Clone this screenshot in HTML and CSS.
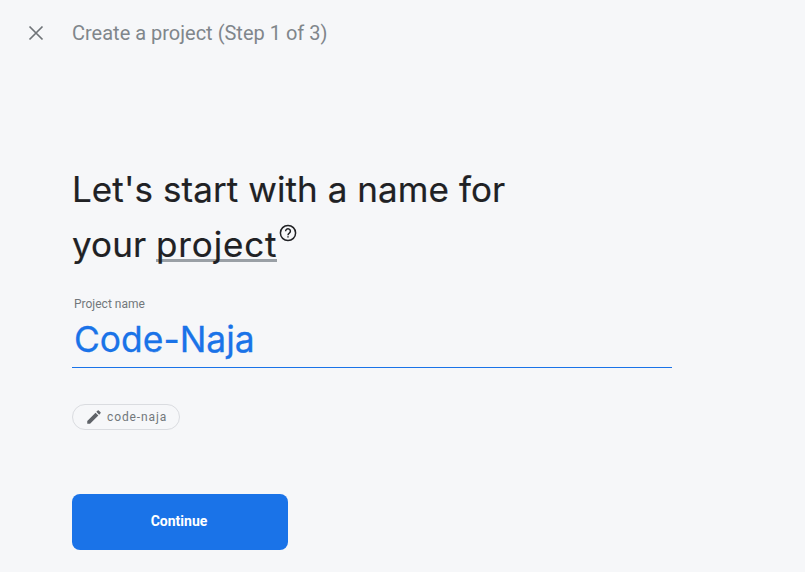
FILE: index.html
```html
<!DOCTYPE html>
<html lang="en">
<head>
    <meta charset="UTF-8">
    <meta name="viewport" content="width=device-width, initial-scale=1.0">
    <title>Create a project</title>
    <link rel="stylesheet" href="styles.css">
</head>
<body>
    <header class="top-bar">
        <button type="button" class="close-btn" aria-label="Close">
            <svg width="24" height="24" viewBox="0 0 24 24"><path d="M5.5 5.5 18.5 18.5M18.5 5.5 5.5 18.5"/></svg>
        </button>
        <span class="step-title">Create a project (Step 1 of 3)</span>
    </header>

    <main class="content">
        <h1>Let's start with a name for<br>your <span class="term">project</span><svg class="help-icon" width="18" height="18" viewBox="0 0 18 18"><circle cx="9" cy="9" r="7.6"/><path d="M6.6 7.2a2.4 2.4 0 1 1 3.7 2c-.9.6-1.3 1-1.3 2"/><path d="M9 12.3v1.3"/></svg></h1>

        <div class="name-field">
            <label for="projectName">Project name</label>
            <input type="text" id="projectName" value="Code-Naja">
        </div>

        <div class="chip">
            <svg width="18" height="18" viewBox="0 0 24 24"><path d="M3 17.25V21h3.75L17.81 9.94l-3.75-3.75L3 17.25zM20.71 7.04a1 1 0 0 0 0-1.41l-2.34-2.34a1 1 0 0 0-1.41 0l-1.83 1.83 3.75 3.75 1.83-1.83z"/></svg>
            <span>code-naja</span>
        </div>

        <button type="button" class="continue-btn">Continue</button>
    </main>
</body>
</html>
```

FILE: styles.css
```css
* {
    margin: 0;
    padding: 0;
    box-sizing: border-box;
}

body {
    background-color: #f6f7f9;
    font-family: Roboto, Arial, sans-serif;
    height: 572px;
    overflow: hidden;
}

.top-bar {
    display: flex;
    align-items: center;
    height: 66px;
    padding-left: 24px;
}

.close-btn {
    display: flex;
    background: none;
    border: none;
    margin-right: 24px;
}

.close-btn svg {
    fill: none;
    stroke: #6f7478;
    stroke-width: 1.7;
}

.step-title {
    font-size: 20px;
    color: #80868b;
}

.content {
    padding: 96px 0 0 72px;
}

h1 {
    font-family: Inter, "Open Sans", sans-serif;
    font-size: 35px;
    font-weight: 400;
    line-height: 55px;
    letter-spacing: 0.08px;
    color: #202124;
    -webkit-text-stroke: 0.2px #202124;
}

.term {
    border-bottom: 3px solid #9aa0a6;
    line-height: 30px;
    letter-spacing: 0.85px;
    display: inline-block;
}

.help-icon {
    vertical-align: 15px;
    margin-left: 2px;
    fill: none;
    stroke: #202124;
    stroke-width: 1.5;
}

.name-field {
    width: 600px;
    margin-top: 25px;
    border-bottom: 1px solid #1a73e8;
}

.name-field label {
    display: block;
    font-size: 12px;
    color: #72777b;
    padding-left: 2px;
}

.name-field input {
    display: block;
    width: 100%;
    height: 56px;
    border: none;
    outline: none;
    background: none;
    padding-left: 2px;
    font-family: Inter, "Open Sans", sans-serif;
    font-size: 35.4px;
    color: #1a73e8;
    -webkit-text-stroke: 0.3px #1a73e8;
}

.chip {
    display: inline-flex;
    align-items: center;
    gap: 4px;
    height: 26px;
    margin-top: 36px;
    padding: 0 12px;
    border: 1px solid #dadce0;
    border-radius: 13px;
    font-size: 12px;
    letter-spacing: 0.9px;
    color: #72777b;
}

.chip svg {
    fill: #5f6368;
}

.continue-btn {
    display: block;
    width: 216px;
    height: 56px;
    margin-top: 64px;
    padding: 0 2px 2px 0;
    background-color: #1a73e8;
    color: white;
    border: none;
    border-radius: 8px;
    font-family: Roboto, Arial, sans-serif;
    font-size: 14px;
    font-weight: 700;
}
```
